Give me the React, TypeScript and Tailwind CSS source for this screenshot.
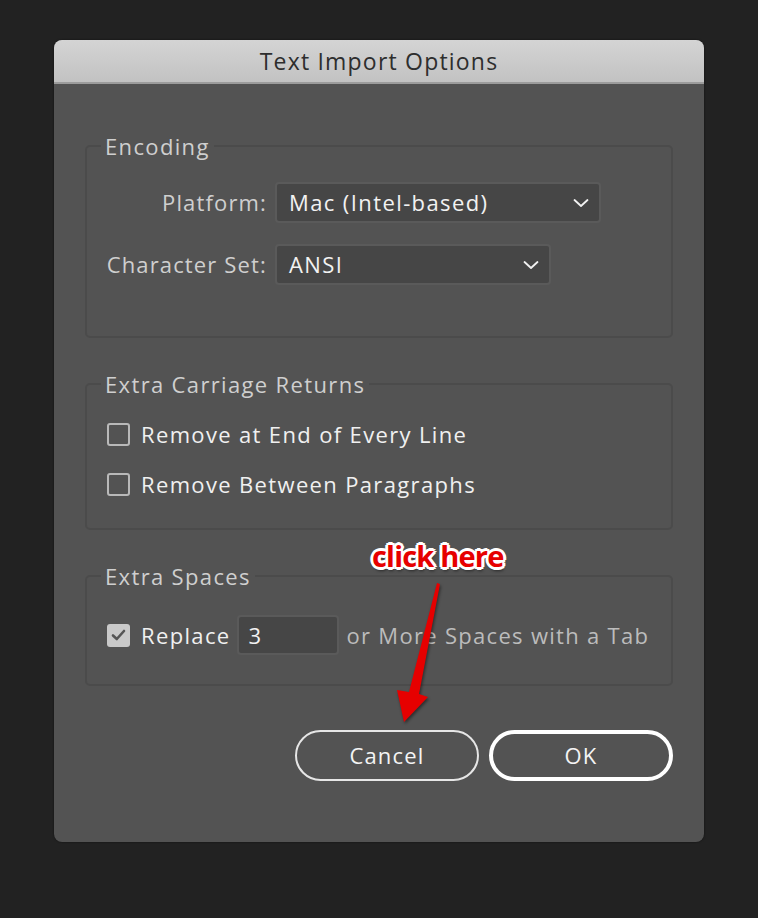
import type { ReactNode } from 'react'

const font = { fontFamily: '"Open Sans", "Liberation Sans", sans-serif' }

function Group({ title, className, children }: { title: string; className?: string; children: ReactNode }) {
  return (
    <fieldset className={`rounded-[5px] border-2 border-[#4b4b4b] px-[14px] ${className ?? ''}`}>
      <legend className="px-[4px] text-[22px] leading-[28px] tracking-[1.35px] text-[#cfcfcf]">{title}</legend>
      {children}
    </fieldset>
  )
}

function Select({ value, width }: { value: string; width: string }) {
  return (
    <div className={`flex h-[41px] items-center justify-between rounded-[4px] border-2 border-[#5a5a5a] bg-[#464646] pl-[12px] pr-[10px] ${width}`}>
      <span className="text-[22px] tracking-[1.4px] text-[#f2f2f2]">{value}</span>
      <svg width="16" height="10" viewBox="0 0 16 10" fill="none">
        <path d="M1.5 2 L8 8 L14.5 2" stroke="#f2f2f2" strokeWidth="1.8" strokeLinecap="round" strokeLinejoin="round" />
      </svg>
    </div>
  )
}

function Checkbox({ checked }: { checked?: boolean }) {
  if (checked) {
    return (
      <span className="flex h-[23px] w-[23px] items-center justify-center rounded-[3px] bg-[#c9c9c9]">
        <svg width="15" height="12" viewBox="0 0 15 12" fill="none">
          <path d="M2 6.5 L5.8 10 L13 2" stroke="#555555" strokeWidth="2.6" strokeLinecap="round" strokeLinejoin="round" />
        </svg>
      </span>
    )
  }
  return <span className="h-[23px] w-[23px] rounded-[3px] border-2 border-[#b9b9b9]" />
}

function CheckRow({ label, className }: { label: string; className?: string }) {
  return (
    <div className={`flex h-[28px] items-center gap-[11px] pl-[6px] ${className ?? ''}`}>
      <Checkbox />
      <span className="text-[22px] tracking-[1.35px] text-[#f0f0f0]">{label}</span>
    </div>
  )
}

export default function App() {
  return (
    <div className="h-[918px] w-full overflow-hidden bg-[#222222] pl-[54px] pt-[40px]" style={font}>
      <div className="relative w-[650px] overflow-hidden rounded-[8px] bg-[#535353] shadow-[0_0_2px_rgba(0,0,0,0.6)]">
        <div className="flex h-[44px] items-center justify-center border-b-2 border-[#9c9c9c] bg-[linear-gradient(#d4d4d4,#c2c2c2)]">
          <span className="text-[23px] tracking-[1.2px] text-[#2e2e2e]">Text Import Options</span>
        </div>

        <div className="px-[31px] pb-[61px] pt-[48px]">
          <Group title="Encoding" className="pb-[51px]">
            <div className="mt-[22px] grid grid-cols-[166px_auto] items-center gap-x-[8px] gap-y-[21px]">
              <span className="text-right text-[22px] tracking-[1.15px] text-[#cfcfcf]">Platform:</span>
              <Select value="Mac (Intel-based)" width="w-[326px]" />
              <span className="text-right text-[22px] tracking-[1.15px] text-[#cfcfcf]">Character Set:</span>
              <Select value="ANSI" width="w-[276px]" />
            </div>
          </Group>

          <Group title="Extra Carriage Returns" className="mt-[32px] pb-[30px]">
            <CheckRow label="Remove at End of Every Line" className="mt-[22px]" />
            <CheckRow label="Remove Between Paragraphs" className="mt-[22px]" />
          </Group>

          <Group title="Extra Spaces" className="mt-[32px] pb-[29px]">
            <div className="mt-[25px] flex h-[40px] items-center pl-[6px]">
              <Checkbox checked />
              <span className="ml-[11px] text-[22px] tracking-[1.35px] text-[#f0f0f0]">Replace</span>
              <div className="ml-[6px] flex h-[40px] w-[102px] items-center rounded-[4px] border-2 border-[#5a5a5a] bg-[#464646] pl-[10px]">
                <span className="text-[22px] text-[#f2f2f2]">3</span>
              </div>
              <span className="ml-[8px] text-[22px] tracking-[1.3px] text-[#bcbcbc]">or More Spaces with a Tab</span>
            </div>
          </Group>

          <div className="mt-[44px] flex justify-end gap-[10px]">
            <button className="flex h-[51px] w-[184px] items-center justify-center rounded-full border-2 border-[#e6e6e6] text-[22px] tracking-[1.2px] text-[#f4f4f4]">
              Cancel
            </button>
            <button className="flex h-[51px] w-[184px] items-center justify-center rounded-full border-[4px] border-white text-[22px] tracking-[1.2px] text-[#f4f4f4]">
              OK
            </button>
          </div>
        </div>

        <span className="absolute left-[318px] top-[494px] text-[29px] font-bold tracking-[-0.8px] text-[#e60000] [text-shadow:-2px_-2px_0_#fff,2px_-2px_0_#fff,-2px_2px_0_#fff,2px_2px_0_#fff,0_-3px_0_#fff,0_3px_0_#fff,-3px_0_0_#fff,3px_0_0_#fff,1px_4px_3px_rgba(0,0,0,0.5)]">
          click here
        </span>
        <svg className="absolute left-0 top-0" width="650" height="801" viewBox="54 40 650 801">
          <polygon
            points="437,583 440,584 419,694 428,697 404,722 397,690 409,692"
            fill="#e60000"
            style={{ filter: 'drop-shadow(1px 2px 1.5px rgba(0,0,0,0.45))' }}
          />
        </svg>
      </div>
    </div>
  )
}
